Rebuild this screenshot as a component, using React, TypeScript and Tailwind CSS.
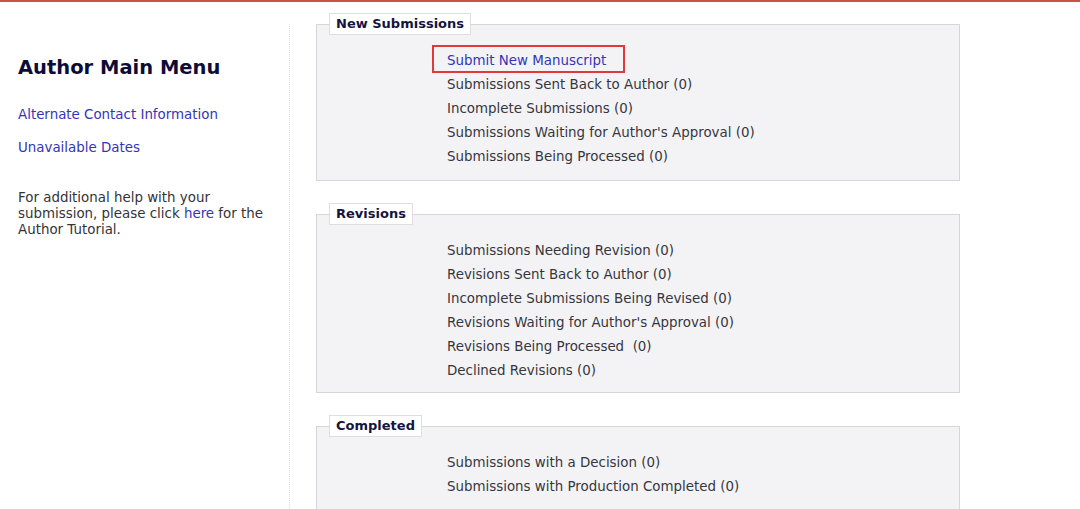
import React from 'react';

type Item = { label: string; link?: boolean; boxed?: boolean };

const sections: { title: string; pb: string; items: Item[] }[] = [
    {
        title: 'New Submissions',
        pb: 'pb-[11px]',
        items: [
            { label: 'Submit New Manuscript', link: true, boxed: true },
            { label: 'Submissions Sent Back to Author (0)' },
            { label: 'Incomplete Submissions (0)' },
            { label: "Submissions Waiting for Author's Approval (0)" },
            { label: 'Submissions Being Processed (0)' },
        ],
    },
    {
        title: 'Revisions',
        pb: 'pb-[9px]',
        items: [
            { label: 'Submissions Needing Revision (0)' },
            { label: 'Revisions Sent Back to Author (0)' },
            { label: 'Incomplete Submissions Being Revised (0)' },
            { label: "Revisions Waiting for Author's Approval (0)" },
            { label: 'Revisions Being Processed\u00a0 (0)' },
            { label: 'Declined Revisions (0)' },
        ],
    },
    {
        title: 'Completed',
        pb: 'pb-[11px]',
        items: [
            { label: 'Submissions with a Decision (0)' },
            { label: 'Submissions with Production Completed (0)' },
        ],
    },
];

const Panel = ({ title, pb, items }: { title: string; pb: string; items: Item[] }) => (
    <fieldset className={`w-[644px] border border-[#d6d6d8] bg-[#f3f3f5] pl-[130px] ${pb}`}>
        <legend className="ml-[-118px] h-[22px] border border-[#dedee2] bg-white px-[6px] text-[13px] font-bold leading-[20px] text-[#14143c]">
            {title}
        </legend>
        <div className="pt-[14px]">
            {items.map((it) => (
                <div key={it.label} className="h-[24px] leading-[24px]">
                    {it.boxed ? (
                        <span className="relative inline-block">
                            <a href="#" className="text-[#3434b8]">{it.label}</a>
                            <span className="absolute left-[-15px] right-[-19px] top-[-4px] bottom-0 border-2 border-[#e0393b]" />
                        </span>
                    ) : it.link ? (
                        <a href="#" className="text-[#3434b8]">{it.label}</a>
                    ) : (
                        <span className="text-[#363640]">{it.label}</span>
                    )}
                </div>
            ))}
        </div>
    </fieldset>
);

export default function App() {
    return (
        <div className="min-h-[509px] border-t-2 border-[#c8533f] bg-white font-['DejaVu_Sans',Verdana,sans-serif] text-[13.4px]">
            <div className="flex">
                {/* Left menu */}
                <div className="mt-[22px] w-[290px] shrink-0 border-r border-dotted border-[#dcdcdc] pl-[18px] pt-[32px]">
                    <h1 className="text-[19.5px] font-bold leading-[24px] text-[#0c0c36]">Author Main Menu</h1>
                    <div className="mt-[27px] leading-[16px]">
                        <a href="#" className="block text-[#3434b8]">Alternate Contact Information</a>
                        <a href="#" className="mt-[17px] block text-[#3434b8]">Unavailable Dates</a>
                    </div>
                    <p className="mt-[34px] w-[250px] leading-[16px] text-[#333338]">
                        For additional help with your submission, please click{' '}
                        <a href="#" className="text-[#3434b8]">here</a> for the Author Tutorial.
                    </p>
                </div>

                {/* Main panels */}
                <div className="flex flex-col gap-[22px] pl-[26px] pt-[11px]">
                    {sections.map((s) => (
                        <Panel key={s.title} title={s.title} pb={s.pb} items={s.items} />
                    ))}
                </div>
            </div>
        </div>
    );
}
